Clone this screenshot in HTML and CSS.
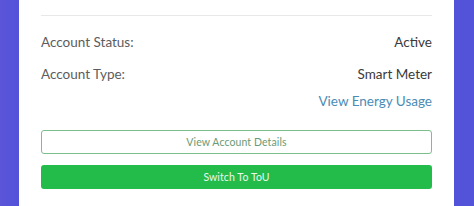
FILE: index.html
```html
<!DOCTYPE html>
<html>
<head>
<meta charset="utf-8">
<link rel="stylesheet" href="styles.css">
</head>
<body>
<div class="card">
  <div class="divider"></div>
  <div class="row first">
    <span class="label">Account Status:</span>
    <span class="value">Active</span>
  </div>
  <div class="row second">
    <span class="label">Account Type:</span>
    <span class="value">Smart Meter</span>
  </div>
  <div class="link-row"><a class="link">View Energy Usage</a></div>
  <button class="btn btn-outline">View Account Details</button>
  <button class="btn btn-solid">Switch To ToU</button>
</div>
</body>
</html>
```

FILE: styles.css
```css
html, body {
  margin: 0;
  padding: 0;
}
body {
  width: 474px;
  height: 206px;
  background: linear-gradient(90deg, #5b55d8 0px, #5353da 19px, #5353da 100%);
  font-family: Lato, "Open Sans", sans-serif;
  overflow: hidden;
}
.card {
  margin: 0 20px 0 19px;
  height: 206px;
  background: #ffffff;
  box-sizing: border-box;
  padding: 15px 22px 0 22px;
  display: flex;
  flex-direction: column;
}
.divider {
  height: 1px;
  background: #e8e8e8;
}
.row {
  display: flex;
  justify-content: space-between;
  align-items: center;
  height: 20px;
  font-size: 13.5px;
}
.row.first { margin-top: 16px; }
.row.second { margin-top: 12px; }
.label { color: #5c5c5c; }
.value { color: #3a3a3a; }
.link-row {
  margin-top: 7px;
  height: 20px;
  display: flex;
  justify-content: flex-end;
  align-items: center;
}
.link {
  color: #4a8cb6;
  font-size: 13.5px;
}
.btn {
  display: block;
  width: 100%;
  height: 24px;
  box-sizing: border-box;
  border-radius: 3px;
  font-family: Lato, "Open Sans", sans-serif;
  font-size: 10.5px;
  letter-spacing: 0.1px;
  padding: 0;
}
.btn-outline {
  margin-top: 19px;
  background: #ffffff;
  border: 1.5px solid #7cbf8c;
  color: #6a9a76;
}
.btn-solid {
  margin-top: 11px;
  background: #23bb4a;
  border: none;
  color: #eaf8ee;
}
```
